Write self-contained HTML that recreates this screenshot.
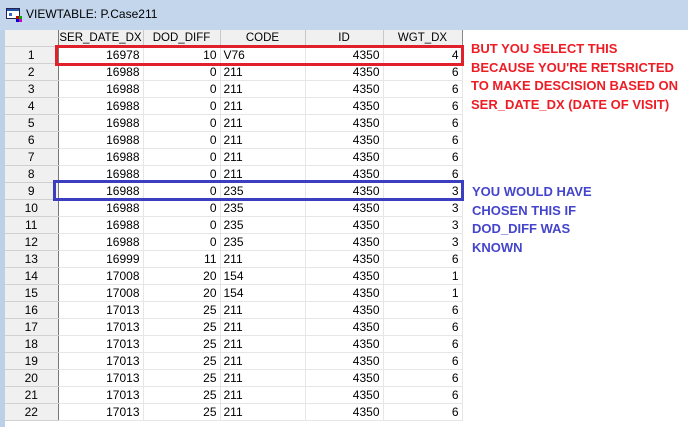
<!DOCTYPE html><html><head><style>
body{margin:0;width:688px;height:427px;background:#fff;position:relative;overflow:hidden;font-family:"Liberation Sans",sans-serif;}
.tb{position:absolute;left:0;top:0;width:688px;height:30px;background:#c3d6ec;}
.tb span{position:absolute;left:26px;top:7px;font-size:12px;color:#000;}
.lb{position:absolute;left:0;top:30px;width:5px;height:397px;background:#bcd0e8;}
table{position:absolute;left:5px;top:30px;border-collapse:collapse;font-size:12px;table-layout:fixed;width:457px;}
td{height:16px;padding:0 3px;border-right:1px solid #e6e6e6;border-bottom:1px solid #e6e6e6;text-align:right;line-height:16px;white-space:nowrap;overflow:hidden;}
td.n{background:#f0f0f0;text-align:center;border-right:1px solid #777;border-bottom:1px solid #d0d0d0;}
td.c{text-align:left;}
tr.h td{background:#f0f0f0;text-align:center;border-bottom:1px solid #d0d0d0;border-right:1px solid #c8c8c8;padding:0;font-size:11.5px;}
.box{position:absolute;box-sizing:border-box;}
.t{position:absolute;font-weight:bold;font-size:13px;line-height:18.5px;}
</style></head><body>
<div class="tb"><svg style="position:absolute;left:6px;top:8px" width="16" height="14"><rect x="0.5" y="0.5" width="13" height="10" fill="#fff" stroke="#225"/><rect x="1" y="1" width="12" height="2" fill="#2255aa"/><rect x="3" y="5" width="3" height="3" fill="#3366cc"/><rect x="10" y="8" width="3" height="3" fill="#c00"/><rect x="13" y="8" width="3" height="3" fill="#0a0"/><rect x="10" y="11" width="3" height="3" fill="#00c"/><rect x="13" y="11" width="3" height="3" fill="#c0c"/></svg><span>VIEWTABLE: P.Case211</span></div>
<div class="lb"></div>
<table>
<colgroup><col style="width:53px"><col style="width:85px"><col style="width:77px"><col style="width:85px"><col style="width:78px"><col style="width:79px"></colgroup>
<tr class="h"><td style="border-right:1px solid #777"></td><td>SER_DATE_DX</td><td>DOD_DIFF</td><td>CODE</td><td>ID</td><td style="border-right:1px solid #888">WGT_DX</td></tr>
<tr><td class="n">1</td><td>16978</td><td>10</td><td class="c">V76</td><td>4350</td><td>4</td></tr>
<tr><td class="n">2</td><td>16988</td><td>0</td><td class="c">211</td><td>4350</td><td>6</td></tr>
<tr><td class="n">3</td><td>16988</td><td>0</td><td class="c">211</td><td>4350</td><td>6</td></tr>
<tr><td class="n">4</td><td>16988</td><td>0</td><td class="c">211</td><td>4350</td><td>6</td></tr>
<tr><td class="n">5</td><td>16988</td><td>0</td><td class="c">211</td><td>4350</td><td>6</td></tr>
<tr><td class="n">6</td><td>16988</td><td>0</td><td class="c">211</td><td>4350</td><td>6</td></tr>
<tr><td class="n">7</td><td>16988</td><td>0</td><td class="c">211</td><td>4350</td><td>6</td></tr>
<tr><td class="n">8</td><td>16988</td><td>0</td><td class="c">211</td><td>4350</td><td>6</td></tr>
<tr><td class="n">9</td><td>16988</td><td>0</td><td class="c">235</td><td>4350</td><td>3</td></tr>
<tr><td class="n">10</td><td>16988</td><td>0</td><td class="c">235</td><td>4350</td><td>3</td></tr>
<tr><td class="n">11</td><td>16988</td><td>0</td><td class="c">235</td><td>4350</td><td>3</td></tr>
<tr><td class="n">12</td><td>16988</td><td>0</td><td class="c">235</td><td>4350</td><td>3</td></tr>
<tr><td class="n">13</td><td>16999</td><td>11</td><td class="c">211</td><td>4350</td><td>6</td></tr>
<tr><td class="n">14</td><td>17008</td><td>20</td><td class="c">154</td><td>4350</td><td>1</td></tr>
<tr><td class="n">15</td><td>17008</td><td>20</td><td class="c">154</td><td>4350</td><td>1</td></tr>
<tr><td class="n">16</td><td>17013</td><td>25</td><td class="c">211</td><td>4350</td><td>6</td></tr>
<tr><td class="n">17</td><td>17013</td><td>25</td><td class="c">211</td><td>4350</td><td>6</td></tr>
<tr><td class="n">18</td><td>17013</td><td>25</td><td class="c">211</td><td>4350</td><td>6</td></tr>
<tr><td class="n">19</td><td>17013</td><td>25</td><td class="c">211</td><td>4350</td><td>6</td></tr>
<tr><td class="n">20</td><td>17013</td><td>25</td><td class="c">211</td><td>4350</td><td>6</td></tr>
<tr><td class="n">21</td><td>17013</td><td>25</td><td class="c">211</td><td>4350</td><td>6</td></tr>
<tr><td class="n">22</td><td>17013</td><td>25</td><td class="c">211</td><td>4350</td><td>6</td></tr>
</table>
<div class="box" style="left:55px;top:45px;width:409px;height:21px;border:3px solid #e0202a"></div>
<div class="box" style="left:53px;top:180px;width:411px;height:21px;border:3px solid #3b3fbf"></div>
<div class="t" style="left:471px;top:40px;color:#ee1c25">BUT YOU SELECT THIS<br>BECAUSE YOU'RE RETSRICTED<br>TO MAKE DESCISION BASED ON<br>SER_DATE_DX (DATE OF VISIT)</div>
<div class="t" style="left:472px;top:183px;color:#4444cc">YOU WOULD HAVE<br>CHOSEN THIS IF<br>DOD_DIFF WAS<br>KNOWN</div>
</body></html>
